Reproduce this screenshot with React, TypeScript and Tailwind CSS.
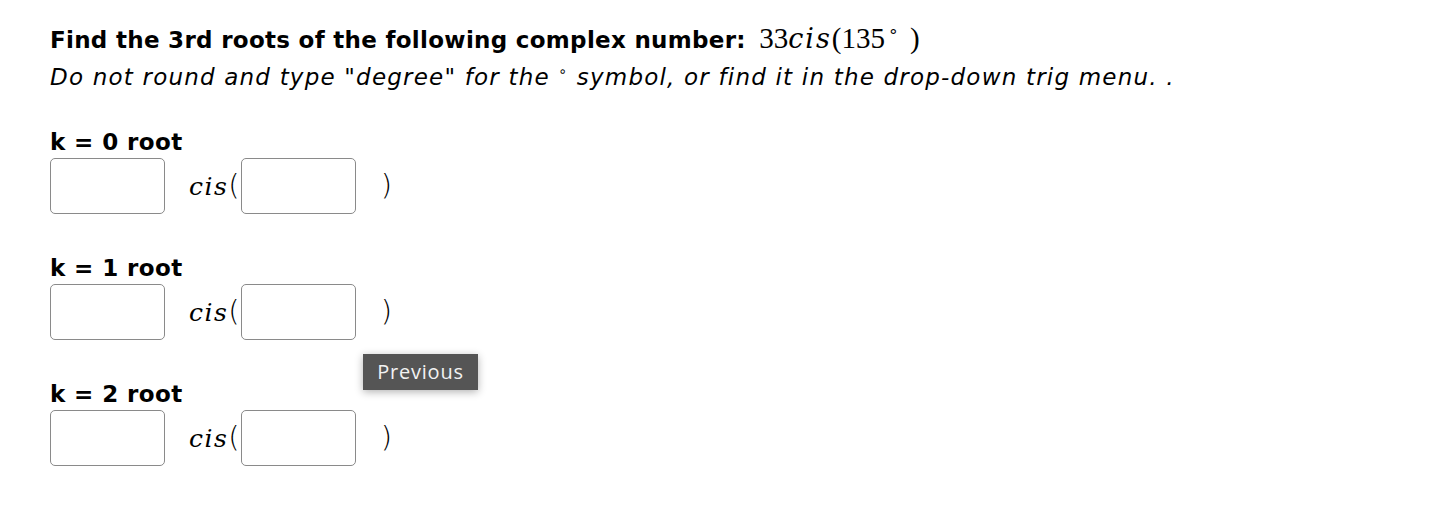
import React from "react";

function Box() {
  return <div className="w-[115px] h-[56px] rounded-[5px] border-[1.5px] border-[#8a8a8a] bg-white" />;
}

function Row({ k }: { k: number }) {
  return (
    <div className="flex flex-col">
      <div className="text-[23px] font-bold tracking-[0.4px] leading-[28px] h-[28px] whitespace-pre">k = {k} root</div>
      <div className="flex items-center mt-[2px]">
        <Box />
        <span className="ml-[24px] font-['DejaVu_Serif'] italic text-[25px] tracking-[1.5px] leading-none">cis</span>
        <span className="text-[29px] leading-none font-light mr-[1px] -mt-[2px]">(</span>
        <Box />
        <span className="ml-[25px] text-[29px] leading-none font-light -mt-[2px]">)</span>
      </div>
    </div>
  );
}

export default function App() {
  return (
    <div className="relative w-[1434px] h-[514px] bg-white text-black font-['DejaVu_Sans',sans-serif]">
      <div className="pl-[50px] pt-[21px] flex flex-col">
        <div className="text-[23px] font-bold tracking-[0.3px] leading-[34px] whitespace-nowrap">
          Find the 3rd roots of the following complex number:{" "}
          <span className="ml-[5px] font-['Liberation_Serif'] font-normal text-[29px] tracking-normal">
            33<span className="font-['DejaVu_Serif'] italic text-[27px] tracking-[2px]">cis</span>(135<span className="relative -top-[12px] text-[17px] ml-[3px] mr-[11px]">∘</span>)
          </span>
        </div>
        <div className="italic text-[23px] tracking-[1.2px] leading-[34px] whitespace-nowrap">
          Do not round and type "degree" for the <span className="relative -top-[9px] not-italic text-[14px]">∘</span> symbol, or find it in the drop-down trig menu. .
        </div>
        <div className="mt-[31px] flex flex-col gap-[40px]">
          <Row k={0} />
          <Row k={1} />
          <Row k={2} />
        </div>
      </div>
      <div className="absolute left-[363px] top-[354px] w-[115px] h-[36px] bg-[#555555] text-[#f2f2f2] text-[20px] tracking-[0.8px] flex items-center justify-center font-['Open_Sans',sans-serif] shadow-[0_2px_8px_rgba(0,0,0,0.3)]">
        Previous
      </div>
    </div>
  );
}
